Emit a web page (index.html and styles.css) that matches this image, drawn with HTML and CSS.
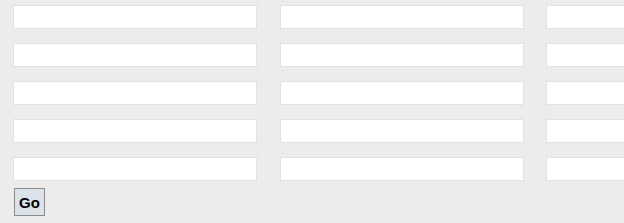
FILE: index.html
```html
<!DOCTYPE html>
<html lang="en">
<head>
    <meta charset="UTF-8">
    <title>Search</title>
    <link rel="stylesheet" href="styles.css">
</head>
<body>

<form class="search-form">
    <div class="field-grid">
        <input type="text" class="field">
        <input type="text" class="field">
        <input type="text" class="field">

        <input type="text" class="field">
        <input type="text" class="field">
        <input type="text" class="field">

        <input type="text" class="field">
        <input type="text" class="field">
        <input type="text" class="field">

        <input type="text" class="field">
        <input type="text" class="field">
        <input type="text" class="field">

        <input type="text" class="field">
        <input type="text" class="field">
        <input type="text" class="field">
    </div>
    <button type="button" class="go-button">Go</button>
</form>

</body>
</html>
```

FILE: styles.css
```css
html, body {
    overflow: hidden;
}
body {
    margin: 0;
    padding: 5px 0 0 13px;
    background-color: #ececec;
    font-family: "Liberation Sans", Arial, sans-serif;
}
.search-form {
    overflow: hidden;
}
.field-grid {
    display: grid;
    grid-template-columns: repeat(3, 244px);
    column-gap: 22.5px;
    row-gap: 14px;
    width: max-content;
}
.field {
    box-sizing: border-box;
    height: 24px;
    margin: 0;
    border: 1px solid #e2e2e2;
    background-color: #fff;
    padding: 2px 4px;
    font-size: 13px;
}
.go-button {
    display: block;
    box-sizing: border-box;
    margin: 7px 0 0 1px;
    width: 31px;
    height: 28px;
    padding: 0;
    background-color: #dce3e8;
    border: 1px solid #8c8c8c;
    font-family: "Liberation Sans", Arial, sans-serif;
    font-size: 15px;
    font-weight: bold;
    color: #000;
}
```
